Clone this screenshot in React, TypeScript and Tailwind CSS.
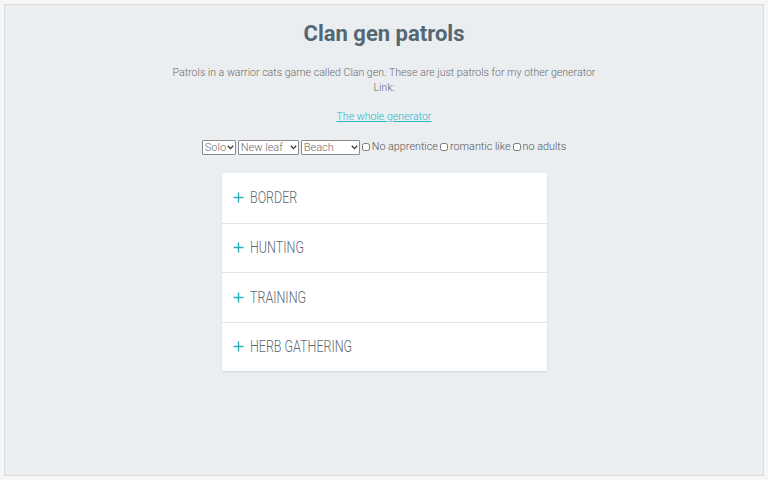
import React from "react";

const sections = ["BORDER", "HUNTING", "TRAINING", "HERB GATHERING"];

function Select({ value, w }: { value: string; w: string }) {
  return (
    <div className={"relative h-[15px] " + w}>
      <select
        className="h-full w-full appearance-none rounded-[1px] border border-[#8a8a8a] bg-white pl-[2px] pr-[7px] text-[11px] leading-none text-[#6b6b6b] outline-none"
        defaultValue={value}
      >
        <option>{value}</option>
      </select>
      <svg
        width="7"
        height="5"
        viewBox="0 0 7 5"
        className="pointer-events-none absolute right-[2px] top-[5px]"
      >
        <path d="M0.8 0.8 3.5 3.6 6.2 0.8" fill="none" stroke="#333" strokeWidth="1.3" />
      </svg>
    </div>
  );
}

export default function App() {
  return (
    <div className="min-h-[480px] w-[768px] bg-[#f6f6f6] p-[4px] font-['Roboto',sans-serif]">
      <div className="flex h-[472px] flex-col items-center border border-[#dadde0] bg-[#eaeef1] pt-[15px]">
        <h1 className="text-[22px] font-bold leading-[28px] text-[#546772]">Clan gen patrols</h1>
        <p className="mt-[17px] w-[440px] text-center text-[10.6px] font-light leading-[15px] text-[#6a6a6a]">
          Patrols in a warrior cats game called Clan gen. These are just patrols for my other generator
          <br />
          Link:
        </p>
        <a href="#" className="mt-[14px] text-[10.6px] font-light leading-[15px] text-[#28b6c8] underline">
          The whole generator
        </a>
        <div className="mt-[15px] flex items-center gap-[2px] text-[10.8px] font-light text-[#555]">
          <Select value="Solo" w="w-[34px]" />
          <Select value="New leaf" w="w-[61px]" />
          <Select value="Beach" w="w-[59px]" />
          {["No apprentice", "romantic like", "no adults"].map((l) => (
            <label key={l} className="flex items-center">
              <input type="checkbox" className="m-0 h-[8px] w-[8px]" />
              <span className="ml-[2px]">{l}</span>
            </label>
          ))}
        </div>
        <div className="mt-[18px] w-[325px] rounded-[2px] bg-white shadow-[0_1px_2px_rgba(0,0,0,0.12)]">
          {sections.map((s, i) => (
            <div
              key={s}
              className={
                "flex h-[49.5px] items-center pl-[11px] pt-[1px] " + (i > 0 ? "border-t border-[#e2e5e8]" : "")
              }
            >
              <svg width="11" height="11" viewBox="0 0 11 11" className="mr-[6px] -mt-[1px]">
                <path d="M5.5 0.5v10M0.5 5.5h10" stroke="#2aaeb8" strokeWidth="1.4" />
              </svg>
              <span className="inline-block origin-left scale-x-[0.78] text-[16px] font-light text-[#5b6973]">
                {s}
              </span>
            </div>
          ))}
        </div>
      </div>
    </div>
  );
}
